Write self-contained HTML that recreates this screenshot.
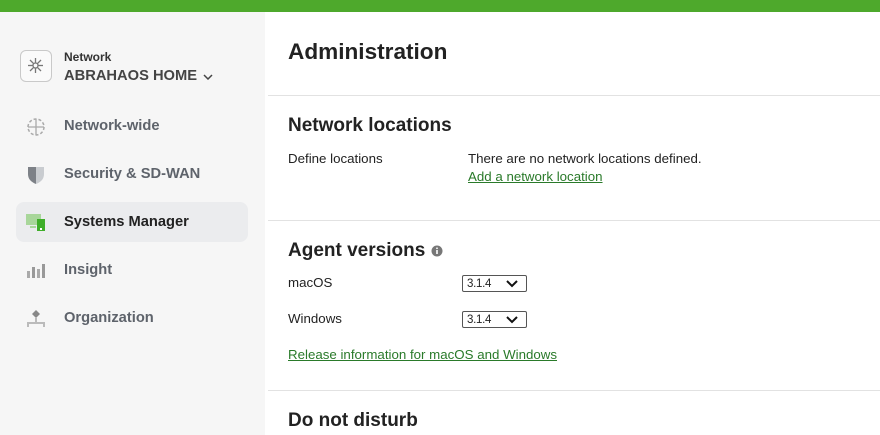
<!DOCTYPE html>
<html><head><style>
*{margin:0;padding:0;box-sizing:border-box}
body{width:880px;height:435px;overflow:hidden;font-family:"Liberation Sans",sans-serif;background:#fff;position:relative;color:#222}
.top{position:absolute;left:0;top:0;width:880px;height:12px;background:#4ea92c}
.side{position:absolute;left:0;top:12px;width:265px;height:423px;background:#f6f6f6}
.nav{position:absolute;left:64px;font-size:14.7px;font-weight:bold;color:#5e636b}
.ico{position:absolute;left:24px}
.sel{position:absolute;left:16px;top:202px;width:232px;height:40px;background:#ebecee;border-radius:8px}
.main{position:absolute;left:265px;top:12px;right:0;bottom:0}
.h1{position:absolute;left:23px;font-size:22.6px;font-weight:bold;color:#222}
.h2{position:absolute;left:23px;font-size:19px;font-weight:bold;color:#222}
.hr{position:absolute;left:3px;right:0;height:1px;background:#e2e2e2}
.t{position:absolute;font-size:13.3px;color:#222}
a{color:#2a7a2a;text-decoration:underline;position:absolute;font-size:13.3px}
.selbox{position:absolute;left:197px;width:65px;height:17px;border:1px solid #555;border-radius:2px;font-size:11.5px;padding:2px 0 0 4px;letter-spacing:-0.3px}
.selbox svg{position:absolute;right:8px;top:4px}
</style></head><body>
<div class="top"></div>
<div class="side">
<div style="position:absolute;left:20px;top:38px;width:32px;height:32px;border:1.5px solid #c9c9c9;border-radius:6px;background:#fafafa">
<svg width="29" height="29" viewBox="0 0 29 29"><g stroke="#777" stroke-width="1.3" fill="#777"><circle cx="14.5" cy="14.5" r="2.5" fill="none"/><line x1="14.5" y1="7" x2="14.5" y2="12"/><line x1="14.5" y1="17" x2="14.5" y2="22"/><line x1="7" y1="14.5" x2="12" y2="14.5"/><line x1="17" y1="14.5" x2="22" y2="14.5"/><line x1="9" y1="9" x2="12.7" y2="12.7"/><line x1="20" y1="9" x2="16.3" y2="12.7"/><line x1="9" y1="20" x2="12.7" y2="16.3"/><line x1="20" y1="20" x2="16.3" y2="16.3"/></g></svg></div>
<div style="position:absolute;left:64px;top:38px;font-size:12px;font-weight:bold;color:#333">Network</div>
<div style="position:absolute;left:64px;top:56px;font-size:14.7px;font-weight:bold;color:#444">ABRAHAOS HOME</div>
<svg style="position:absolute;left:203px;top:62px" width="10" height="6" viewBox="0 0 10 6"><path d="M1 1l4 4 4-4" stroke="#444" stroke-width="1.5" fill="none"/></svg>
</div>
<div class="sel"></div>
<svg class="ico" style="top:115px" width="24" height="24" viewBox="0 0 24 24"><circle cx="12" cy="12" r="8" fill="none" stroke="#aaa" stroke-width="1.5" stroke-dasharray="3 2"/><path d="M4 12h16M12 4v16" stroke="#aaa" stroke-width="1.3"/></svg>
<svg class="ico" style="top:163px" width="24" height="24" viewBox="0 0 24 24"><path d="M4 4h8v17c-5-2-8-5-8-10z" fill="#7d8187"/><path d="M12 4h8v7c0 5-3 8-8 10z" fill="#c9ccd0"/></svg>
<svg class="ico" style="top:211px" width="24" height="24" viewBox="0 0 24 24"><rect x="2" y="3" width="15" height="11" fill="#a8d69a"/><rect x="6" y="15" width="6" height="2" fill="#a8d69a"/><rect x="13" y="8" width="8" height="12" fill="#3fae2a"/><rect x="16" y="17" width="2" height="2" fill="#fff"/></svg>
<svg class="ico" style="top:259px" width="24" height="24" viewBox="0 0 24 24"><rect x="3" y="12" width="3" height="7" fill="#aaa"/><rect x="8" y="8" width="3" height="11" fill="#999"/><rect x="13" y="10" width="3" height="9" fill="#aaa"/><rect x="18" y="5" width="3" height="14" fill="#999"/></svg>
<svg class="ico" style="top:307px" width="24" height="24" viewBox="0 0 24 24"><path d="M12 3l4 4-4 4-4-4z" fill="#888"/><path d="M12 11v4M4 20v-4h16v4" stroke="#bbb" stroke-width="2" fill="none"/></svg>
<div class="nav" style="top:118px">Network-wide</div>
<div class="nav" style="top:166px">Security &amp; SD-WAN</div>
<div class="nav" style="top:214px;color:#222">Systems Manager</div>
<div class="nav" style="top:262px">Insight</div>
<div class="nav" style="top:310px">Organization</div>
<div class="main">
<div class="h1" style="top:27px">Administration</div>
<div class="hr" style="top:83px"></div>
<div class="h2" style="top:103px">Network locations</div>
<div class="t" style="left:23px;top:139px">Define locations</div>
<div class="t" style="left:203px;top:139px">There are no network locations defined.</div>
<a style="left:203px;top:157px">Add a network location</a>
<div class="hr" style="top:208px"></div>
<div class="h2" style="top:228px">Agent versions <svg width="12" height="12" viewBox="0 0 12 12" style="vertical-align:-1px"><circle cx="6" cy="6" r="5.5" fill="#777"/><rect x="5.2" y="5" width="1.6" height="4" fill="#fff"/><circle cx="6" cy="3.3" r="0.9" fill="#fff"/></svg></div>
<div class="t" style="left:23px;top:263px">macOS</div>
<div class="selbox" style="top:263px">3.1.4<svg width="12" height="8" viewBox="0 0 12 8"><path d="M1 1l5 5 5-5" stroke="#111" stroke-width="2" fill="none"/></svg></div>
<div class="t" style="left:23px;top:299px">Windows</div>
<div class="selbox" style="top:299px">3.1.4<svg width="12" height="8" viewBox="0 0 12 8"><path d="M1 1l5 5 5-5" stroke="#111" stroke-width="2" fill="none"/></svg></div>
<a style="left:23px;top:335px">Release information for macOS and Windows</a>
<div class="hr" style="top:378px"></div>
<div class="h2" style="top:398px">Do not disturb</div>
</div>
</body></html>
